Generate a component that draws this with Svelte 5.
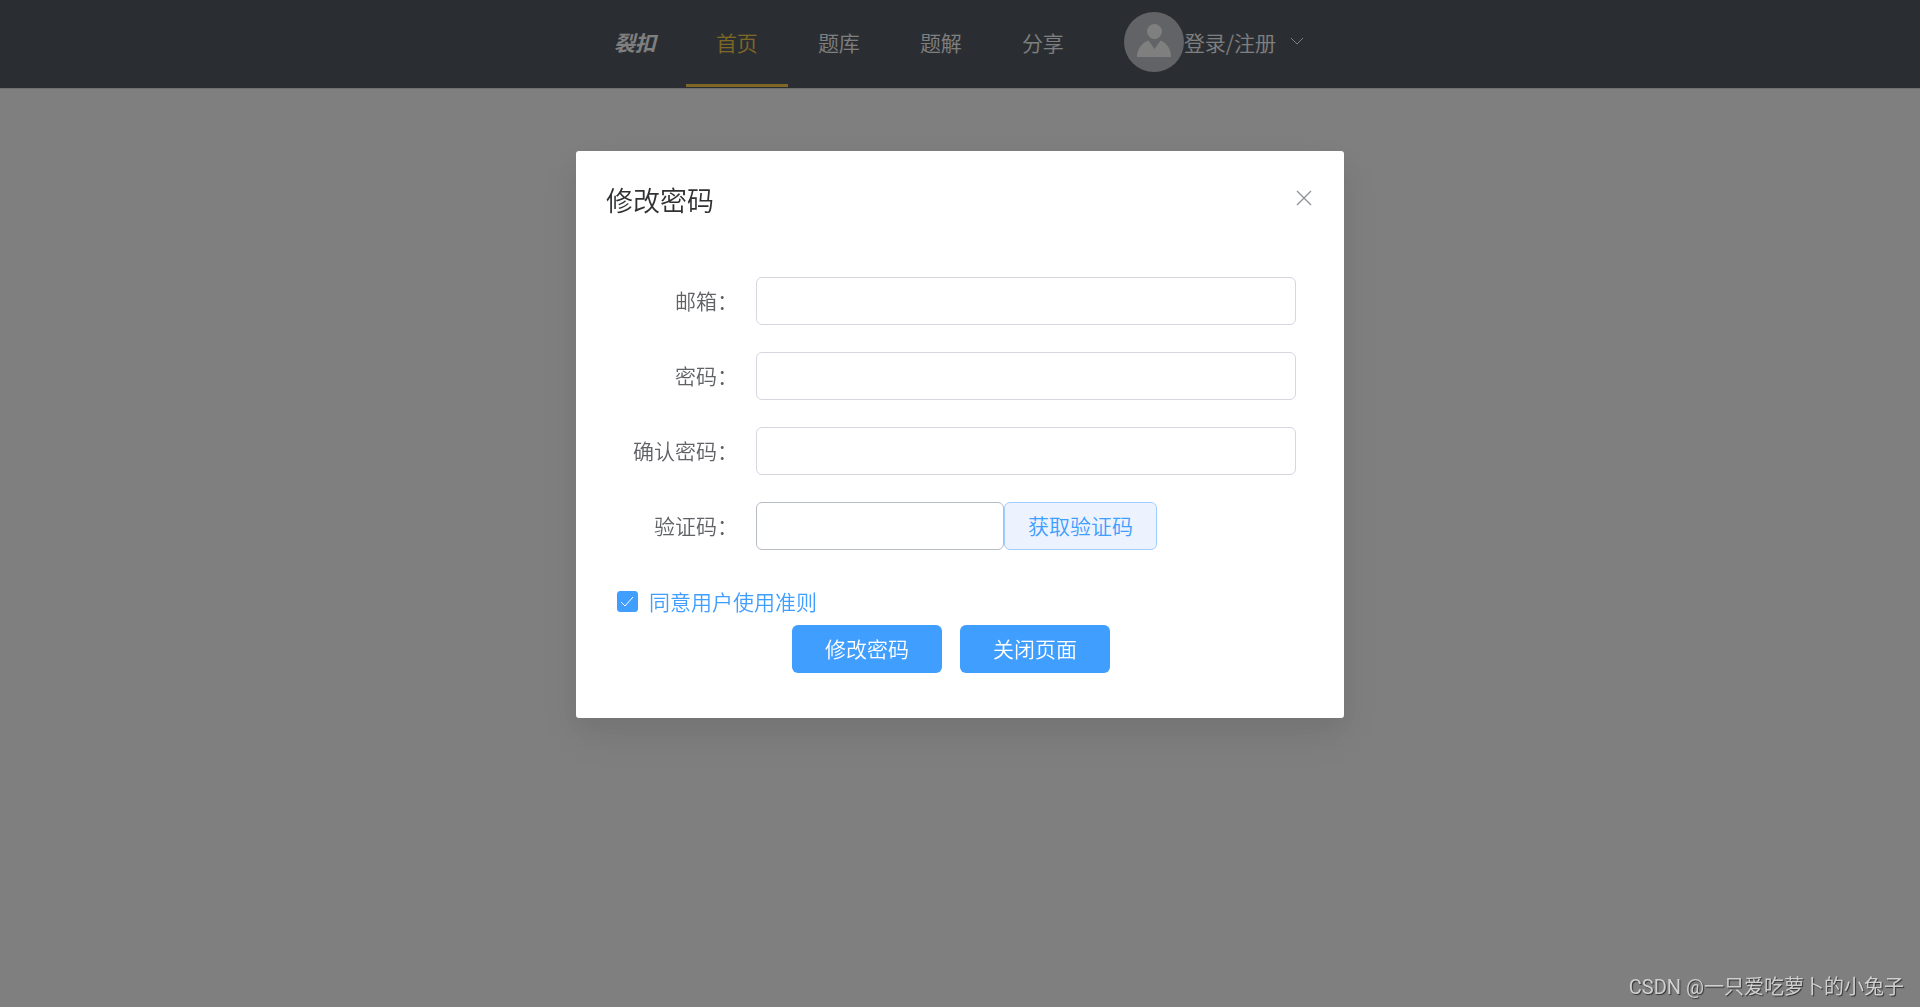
<script lang="ts">
  const nav = [`首页`, `题库`, `题解`, `分享`]
  let active = $state(`首页`)
  let agree = $state(true)
  let open = $state(true)
  let form = $state({ email: ``, password: ``, confirm: ``, code: `` })

  const fields = [
    { key: `email`, label: `邮箱：`, type: `text` },
    { key: `password`, label: `密码：`, type: `password` },
    { key: `confirm`, label: `确认密码：`, type: `password` },
  ] as const

  function submit(event: SubmitEvent) {
    event.preventDefault()
  }
</script>

<div class="page">
  <header>
    <nav>
      <a class="item logo" href="#home">裂扣</a>
      {#each nav as name (name)}
        <a
          class="item"
          class:active={active === name}
          href="#{name}"
          onclick={() => (active = name)}>{name}</a
        >
      {/each}
      <button class="item user" type="button">
        <svg class="avatar" viewBox="0 0 60 60" aria-hidden="true">
          <circle cx="30" cy="30" r="30" fill="#c4c6cc" />
          <circle cx="30.5" cy="19.5" r="7.5" fill="#fff" />
          <path d="M13 45c0-8 4.500-14 11.500-16.500L30.500 37l6-8.500C43 31 47 37 47 45z" fill="#fff" />
        </svg>
        <span>登录/注册</span>
        <svg class="arrow" viewBox="0 0 18 18" aria-hidden="true">
          <path d="M3 5l6 6 6-6" fill="none" stroke="currentColor" stroke-width="1" />
        </svg>
      </button>
    </nav>
  </header>
  <p class="watermark">CSDN @一只爱吃萝卜的小兔子</p>
</div>

{#if open}
  <div class="overlay">
    <div class="dialog" role="dialog" aria-modal="true" aria-labelledby="dialog-title">
      <div class="head">
        <h1 id="dialog-title">修改密码</h1>
        <button class="close" type="button" aria-label="关闭" onclick={() => (open = false)}>
          <svg viewBox="0 0 20 20" aria-hidden="true">
            <path d="M3 3l14 14M17 3L3 17" fill="none" stroke="currentColor" stroke-width="1.4" />
          </svg>
        </button>
      </div>

      <form onsubmit={submit}>
        {#each fields as { key, label, type } (key)}
          <div class="row">
            <label for={key}>{label}</label>
            <input id={key} {type} bind:value={form[key]} />
          </div>
        {/each}
        <div class="row">
          <label for="code">验证码：</label>
          <input id="code" class="code" type="text" bind:value={form.code} />
          <button class="plain" type="button">获取验证码</button>
        </div>
        <div class="agree">
          <span class="tick">
            <input id="agree" type="checkbox" bind:checked={agree} />
            {#if agree}
              <svg viewBox="0 0 21 21" aria-hidden="true">
                <path d="M4 11l4 4 8-9" fill="none" stroke="#fff" stroke-width="1" />
              </svg>
            {/if}
          </span>
          <label for="agree">同意用户使用准则</label>
        </div>
        <div class="actions">
          <button class="primary" type="submit">修改密码</button>
          <button class="primary" type="button" onclick={() => (open = false)}>关闭页面</button>
        </div>
      </form>
    </div>
  </div>
{/if}

<style>
  :global(body) {
    margin: 0;
    font-family: "Noto Sans CJK SC", sans-serif;
    font-size: 21px;
    font-weight: 350;
  }
  .page {
    display: flex;
    flex-direction: column;
    justify-content: space-between;
    min-height: 100vh;
    background: #fff;
  }
  button,
  input {
    box-sizing: border-box;
    margin: 0;
    font: inherit;
  }
  button {
    padding: 0;
    border: 0;
    background: none;
    cursor: pointer;
  }

  header {
    background: #545c64;
    border-bottom: 1px solid #dcdfe6;
  }
  nav {
    display: flex;
    justify-content: center;
    height: 88px;
  }
  .item {
    display: flex;
    align-items: center;
    box-sizing: border-box;
    height: 87px;
    padding: 0 30px;
    border-bottom: 3px solid transparent;
    color: #fff;
    line-height: 30px;
    text-decoration: none;
    white-space: nowrap;
  }
  .item.active {
    border-color: #ffd04b;
    color: #ffd04b;
  }
  .logo {
    font-style: italic;
    font-weight: 700;
  }
  .avatar {
    width: 60px;
    height: 60px;
  }
  .arrow {
    width: 18px;
    height: 18px;
    margin-left: 12px;
  }

  .watermark {
    position: relative;
    z-index: 2;
    margin: 0;
    padding: 0 16px 5px;
    color: #d0d0d0;
    font-family: "Liberation Sans Narrow", Roboto, "Noto Sans CJK SC", sans-serif;
    font-size: 20px;
    font-weight: 400;
    line-height: 30px;
    text-align: right;
    text-shadow: 1px 1px 1px #333;
  }

  .overlay {
    position: fixed;
    inset: 0;
    z-index: 1;
    overflow: auto;
    background: rgba(0, 0, 0, 0.5);
  }
  .dialog {
    box-sizing: border-box;
    width: 40%;
    min-width: 640px;
    margin: 15vh auto 50px;
    border-radius: 3px;
    background: #fff;
    box-shadow: 0 18px 48px 12px rgba(0, 0, 0, 0.04), 0 12px 30px rgba(0, 0, 0, 0.08);
  }
  .head {
    display: flex;
    justify-content: space-between;
    align-items: flex-start;
    padding: 30px 30px 0;
  }
  h1 {
    margin: 0;
    color: #303133;
    font-size: 27px;
    font-weight: 350;
    line-height: 38px;
  }
  .close {
    display: grid;
    place-items: center;
    width: 20px;
    height: 34px;
    color: #909399;
  }
  .close svg {
    width: 20px;
    height: 20px;
  }

  form {
    padding: 58px 48px 45px 30px;
  }
  .row {
    display: flex;
    margin-bottom: 27px;
  }
  .row label {
    flex: none;
    box-sizing: border-box;
    width: 150px;
    padding-right: 18px;
    color: #606266;
    line-height: 46px;
    text-align: right;
  }
  .row input {
    flex: 1;
    min-width: 0;
    height: 48px;
    padding: 0 17px;
    border: 1px solid #d4d7e0;
    border-radius: 6px;
    outline: none;
    background: #fff;
    color: #606266;
  }
  .row .code {
    flex: 0 1 248px;
    border-color: #b8bcc4;
  }
  .row input:focus {
    border-color: #409eff;
  }
  .plain {
    height: 48px;
    padding: 0 23px 2px;
    border: 1px solid #a0cfff;
    border-radius: 6px;
    background: #ecf3ff;
    color: #409eff;
    white-space: nowrap;
  }

  .agree {
    display: flex;
    align-items: center;
    height: 48px;
    padding-left: 11px;
    color: #409eff;
  }
  .agree label {
    padding-left: 11px;
  }
  .tick {
    display: grid;
    width: 21px;
    height: 21px;
  }
  .tick > :global(*) {
    grid-area: 1 / 1;
  }
  .tick input {
    width: 21px;
    height: 21px;
    appearance: none;
    border: 1px solid #dcdfe6;
    border-radius: 3px;
    background: #fff;
  }
  .tick input:checked {
    border-color: #409eff;
    background: #409eff;
  }
  .tick svg {
    pointer-events: none;
  }

  .actions {
    display: flex;
    justify-content: center;
    gap: 18px;
  }
  .primary {
    height: 48px;
    padding: 0 33px 2px;
    border-radius: 6px;
    background: #409eff;
    color: #fff;
  }
</style>
